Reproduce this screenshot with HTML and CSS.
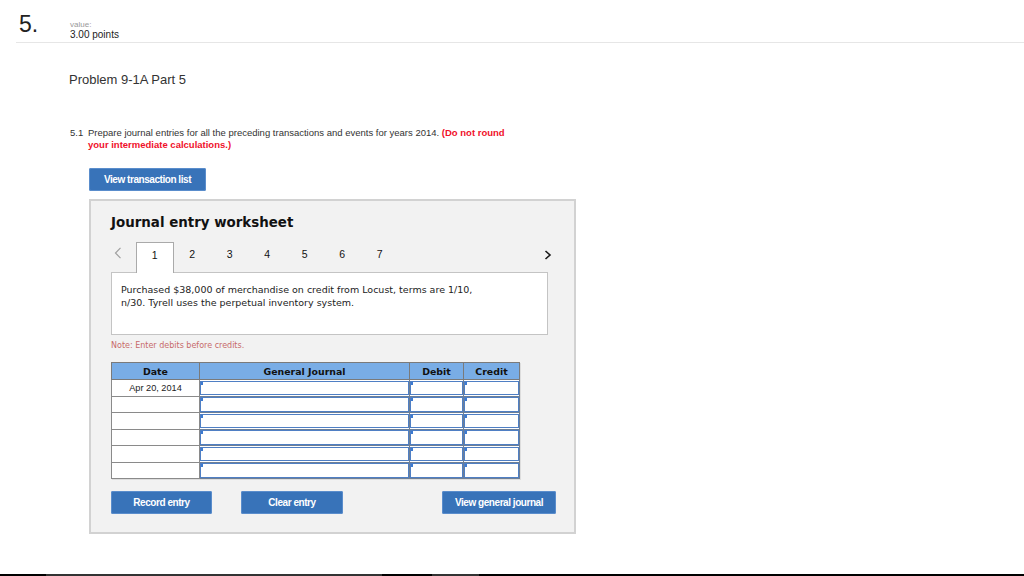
FILE: index.html
```html
<!DOCTYPE html>
<html>
<head>
<meta charset="utf-8">
<link rel="stylesheet" href="styles.css">
</head>
<body>
<div class="page">
  <header class="qhead">
    <div class="qnum">5.</div>
    <div class="qval">
      <div class="vlabel">value:</div>
      <div class="pts">3.00 points</div>
    </div>
  </header>
  <main class="content">
    <h1 class="ptitle">Problem 9-1A Part 5</h1>
    <div class="instr">
      <span class="inum">5.1</span>
      <p class="itext">Prepare journal entries for all the preceding transactions and events for years 2014. <b class="red">(Do not round your intermediate calculations.)</b></p>
    </div>
    <button class="btn btn-tl">View transaction list</button>
    <section class="panel">
      <h2 class="wtitle">Journal entry worksheet</h2>
      <div class="tabs">
        <span class="arrow prev"><svg width="8" height="12" viewBox="0 0 8 12"><path d="M6.5 0.8 L1.5 6 L6.5 11.2" fill="none" stroke="#a0a0a0" stroke-width="1.2"/></svg></span>
        <span class="tab active">1</span>
        <span class="tab">2</span>
        <span class="tab">3</span>
        <span class="tab">4</span>
        <span class="tab">5</span>
        <span class="tab">6</span>
        <span class="tab">7</span>
        <span class="spacer"></span>
        <span class="arrow next"><svg width="8" height="10" viewBox="0 0 8 10"><path d="M1.5 1 L6 5 L1.5 9" fill="none" stroke="#1a1a1a" stroke-width="1.6"/></svg></span>
      </div>
      <div class="desc">Purchased $38,000 of merchandise on credit from Locust, terms are 1/10, n/30. Tyrell uses the perpetual inventory system.</div>
      <div class="note">Note: Enter debits before credits.</div>
      <table class="jt">
        <thead>
          <tr><th class="c-date">Date</th><th class="c-gj">General Journal</th><th class="c-dr">Debit</th><th class="c-cr">Credit</th></tr>
        </thead>
        <tbody>
          <tr><td class="date">Apr 20, 2014</td><td class="in"><div class="box"></div></td><td class="in"><div class="box"></div></td><td class="in"><div class="box"></div></td></tr>
          <tr><td class="date"></td><td class="in"><div class="box"></div></td><td class="in"><div class="box"></div></td><td class="in"><div class="box"></div></td></tr>
          <tr><td class="date"></td><td class="in"><div class="box"></div></td><td class="in"><div class="box"></div></td><td class="in"><div class="box"></div></td></tr>
          <tr><td class="date"></td><td class="in"><div class="box"></div></td><td class="in"><div class="box"></div></td><td class="in"><div class="box"></div></td></tr>
          <tr><td class="date"></td><td class="in"><div class="box"></div></td><td class="in"><div class="box"></div></td><td class="in"><div class="box"></div></td></tr>
          <tr><td class="date"></td><td class="in"><div class="box"></div></td><td class="in"><div class="box"></div></td><td class="in"><div class="box"></div></td></tr>
        </tbody>
      </table>
      <div class="actions">
        <button class="btn btn-rec">Record entry</button>
        <button class="btn btn-clr">Clear entry</button>
        <span class="spacer"></span>
        <button class="btn btn-gj">View general journal</button>
      </div>
    </section>
  </main>
  <footer class="bar">
    <span class="s1"></span><span class="s2"></span><span class="s3"></span><span class="s4"></span><span class="s5"></span>
  </footer>
</div>
</body>
</html>
```

FILE: styles.css
```css
* { box-sizing: border-box; }
html, body { margin: 0; padding: 0; background: #fff; }
body { font-family: "Liberation Sans", Arial, sans-serif; color: #333; }
.page { min-height: 100vh; display: flex; flex-direction: column; }

.qhead {
  display: flex;
  margin-left: 16px;
  height: 43px;
  border-bottom: 1px solid #e6e6e6;
}
.qnum {
  width: 54px;
  padding-left: 3px;
  padding-top: 11px;
  font-size: 23px;
  line-height: 26px;
  color: #222;
}
.qval { padding-top: 20px; }
.vlabel { font-size: 8px; line-height: 9px; color: #999; }
.pts { font-size: 10px; line-height: 11px; color: #222; }

.content { padding-left: 69px; }
.ptitle {
  margin: 29px 0 0 0;
  font-size: 13px;
  line-height: 16px;
  font-weight: normal;
  color: #333;
}
.instr {
  display: flex;
  margin-top: 39px;
  font-size: 9.5px;
  line-height: 11.5px;
  color: #333;
}
.inum { width: 19px; flex: none; padding-left: 1px; }
.itext { margin: 0; width: 428px; }
.red { color: #f0102a; font-weight: bold; }

.btn {
  display: block;
  border: none;
  border-radius: 2px;
  background: #3873b9;
  color: #fff;
  font-family: "Liberation Sans", Arial, sans-serif;
  font-weight: bold;
  font-size: 10px;
  letter-spacing: -0.45px;
  height: 23px;
  padding: 0;
  box-shadow: 0 0 0 1px #5a8dcc inset;
}
.btn-tl { margin: 18px 0 0 20px; width: 117px; }

.panel {
  margin: 8px 0 0 20px;
  width: 487px;
  height: 335px;
  background: #f2f2f2;
  border: 2px solid #d2d2d2;
  padding: 13px 0 0 20px;
  font-family: "DejaVu Sans", Verdana, sans-serif;
}
.wtitle {
  margin: 0;
  font-size: 13.4px;
  line-height: 17px;
  font-weight: bold;
  color: #111;
}
.tabs {
  display: flex;
  align-items: stretch;
  width: 437px;
  height: 30px;
  margin-top: 11px;
  position: relative;
  z-index: 1;
}
.arrow { display: flex; align-items: flex-start; }
.prev { width: 25px; padding-left: 3px; padding-top: 5px; }
.next { width: 8px; margin-right: -4px; padding-top: 8px; }
.spacer { flex: 1; }
.tab {
  width: 37.5px;
  text-align: center;
  font-family: "Liberation Sans", Arial, sans-serif;
  font-size: 10.5px;
  line-height: 25px;
  color: #111;
}
.tab.active {
  background: #fff;
  border: 1px solid #aaa;
  border-bottom: none;
  margin-bottom: -1px;
  line-height: 24px;
}
.desc {
  width: 437px;
  height: 63px;
  background: #fff;
  border: 1px solid #c4c4c4;
  padding: 10px 62px 0 9px;
  font-size: 9.5px;
  line-height: 13px;
  color: #222;
}
.note {
  margin-top: 6px;
  font-size: 8px;
  line-height: 10px;
  color: #c76a6a;
}
.jt {
  margin-top: 11px;
  border-collapse: collapse;
  width: 408px;
  table-layout: fixed;
  box-shadow: 1px 1px 0 #ddd;
}
.jt th {
  background: #79ade6;
  border: 1px solid #7a7a7a;
  height: 17px;
  padding: 0;
  font-size: 9.4px;
  font-weight: bold;
  color: #111;
}
.c-date { width: 88px; }
.c-gj { width: 210px; }
.c-dr { width: 54px; }
.c-cr { width: 56px; }
.jt td {
  height: 16.5px;
  padding: 0;
  border: 1px solid #8a8a8a;
  background: #fff;
}
.jt td.date {
  text-align: center;
  font-family: "Liberation Sans", Arial, sans-serif;
  font-size: 9.2px;
  color: #222;
}
.jt td.in { border: 1px solid #6e7f95; }
.box {
  height: 14.5px;
  border: 1px solid #4f7fc4;
  background: #fff;
  position: relative;
}
.box::before {
  content: "";
  position: absolute;
  left: 0;
  top: 0;
  width: 2px;
  height: 3px;
  background: #3d7ad0;
}

.actions {
  display: flex;
  width: 445px;
  margin-top: 12px;
}
.btn-rec { width: 101px; }
.btn-clr { width: 102px; margin-left: 29px; }
.btn-gj { width: 114px; }

.bar { margin-top: auto; display: flex; height: 2px; }
.bar span { display: block; height: 2px; }
.s1 { width: 46px; background: #000; }
.s2 { width: 336px; background: #333; }
.s3 { width: 50px; background: #000; }
.s4 { width: 47px; background: #333; }
.s5 { flex: 1; background: #000; }
```
